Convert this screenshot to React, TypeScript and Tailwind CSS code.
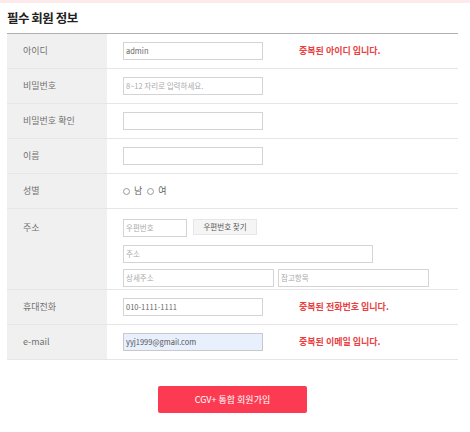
import React from "react";

const font = { fontFamily: '"Noto Sans CJK KR", "Noto Sans", sans-serif' };

function Field({ value, placeholder, className = "" }: { value?: string; placeholder?: string; className?: string }) {
    return (
        <div className={`flex h-[18px] items-center border border-[#d4d4d4] bg-white px-[2px] text-[7.5px] ${className}`}>
            {value ? <span className="text-[#666]">{value}</span> : <span className="text-[#aaa]">{placeholder}</span>}
        </div>
    );
}

function Row({ label, children, tall }: { label: string; children: React.ReactNode; tall?: boolean }) {
    return (
        <div className={`grid grid-cols-[100px_1fr] border-b border-[#e6e6e6] ${tall ? "h-[81px]" : "h-[35px]"}`}>
            <div className={`flex bg-[#f0f0f0] pl-[16px] text-[9px] text-[#707070] ${tall ? "items-start pt-[12px]" : "items-center"}`}>{label}</div>
            <div className={`flex pl-[16px] ${tall ? "flex-col pt-[10px]" : "items-center"}`}>{children}</div>
        </div>
    );
}

function Err({ text }: { text: string }) {
    return <span className="ml-[36px] text-[9px] font-bold text-[#e8413f]">{text}</span>;
}

function Radio({ label }: { label: string }) {
    return (
        <span className="flex items-center gap-[4px] text-[9px] text-[#666]">
            <span className="h-[7px] w-[7px] rounded-full border border-[#999]" />
            {label}
        </span>
    );
}

export default function App() {
    return (
        <div className="w-[470px] bg-white" style={font}>
            <div className="h-[3px] bg-[#fdeaea]" />
            <div className="ml-[7px] w-[451px]">
                <div className="flex h-[30px] items-center text-[12.5px] font-bold tracking-[-0.04em] text-[#222]">필수 회원 정보</div>
                <div className="border-t border-[#b0b0b0]">
                    <Row label="아이디">
                        <Field value="admin" className="w-[140px]" />
                        <Err text="중복된 아이디 입니다." />
                    </Row>
                    <Row label="비밀번호">
                        <Field placeholder="8~12 자리로 입력하세요." className="w-[140px]" />
                    </Row>
                    <Row label="비밀번호 확인">
                        <Field className="w-[140px]" />
                    </Row>
                    <Row label="이름">
                        <Field className="w-[140px]" />
                    </Row>
                    <Row label="성별">
                        <div className="flex items-center gap-[5px]">
                            <Radio label="남" />
                            <Radio label="여" />
                        </div>
                    </Row>
                    <Row label="주소" tall>
                        <div className="flex gap-[6px]">
                            <Field placeholder="우편번호" className="h-[15px] w-[64px]" />
                            <button className="flex h-[16px] w-[64px] items-center justify-center border border-[#e6e6e6] bg-[#f5f5f5] text-[7.5px] text-[#555]">
                                우편번호 찾기
                            </button>
                        </div>
                        <Field placeholder="주소" className="mt-[8px] h-[16px] w-[250px]" />
                        <div className="mt-[6px] flex gap-[4px]">
                            <Field placeholder="상세주소" className="h-[17px] w-[151px]" />
                            <Field placeholder="참고항목" className="h-[17px] w-[151px]" />
                        </div>
                    </Row>
                    <Row label="휴대전화">
                        <Field value="010-1111-1111" className="w-[140px]" />
                        <Err text="중복된 전화번호 입니다." />
                    </Row>
                    <Row label="e-mail">
                        <div className="flex h-[18px] w-[140px] items-center border border-[#c9c9c9] bg-[#e8f0fe] px-[2px] text-[7.5px] text-[#555]">
                            yyj1999@gmail.com
                        </div>
                        <Err text="중복된 이메일 입니다." />
                    </Row>
                </div>
            </div>
            <div className="flex justify-center pt-[26px]">
                <button className="ml-[-5px] flex h-[27px] w-[149px] items-center justify-center rounded-[2px] bg-[#fc3b52] text-[9px] text-white">
                    CGV+ 통합 회원가입
                </button>
            </div>
            <div className="mt-[19px] border-b-2 border-dashed border-[#6f7d8a]" />
        </div>
    );
}
